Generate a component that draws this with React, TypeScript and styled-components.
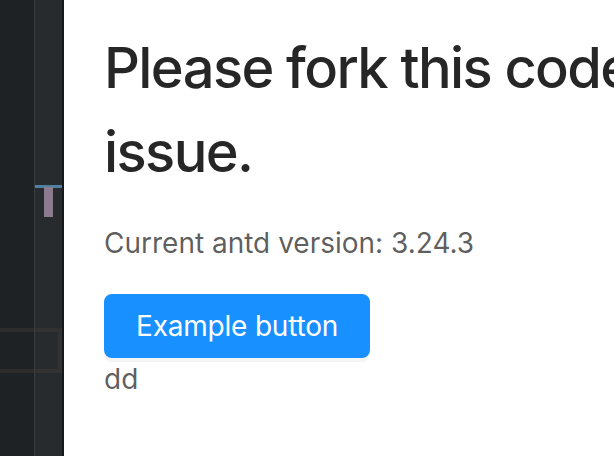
import React from "react";
import styled, { createGlobalStyle } from "styled-components";

const Global = createGlobalStyle`
  html, body { margin: 0; padding: 0; background: #ffffff; }
  body { font-family: Inter, "Noto Sans", "Liberation Sans", sans-serif; }
`;

const Frame = styled.div`
  display: flex;
  width: 614px;
  height: 456px;
  overflow: hidden;
`;

const Sidebar = styled.aside`
  position: relative;
  display: flex;
  flex: 0 0 64px;
  height: 100%;
`;

const Gutter = styled.div`
  width: 34px;
  background: #1e2225;
`;

const Divider = styled.div`
  width: 1px;
  background: #3a3e41;
`;

const Column = styled.div`
  width: 27px;
  background: #272b2e;
  padding-top: 185px;
  box-sizing: border-box;
`;

const CursorLine = styled.div`
  height: 3px;
  background: #4f7fa1;
`;

const Marker = styled.div`
  width: 9px;
  height: 30px;
  margin: -1px 0 0 9px;
  background: #8c7b8e;
`;

const Edge = styled.div`
  width: 2px;
  background: #16181a;
`;

const SelectionBox = styled.div`
  position: absolute;
  left: 0;
  top: 328px;
  width: 58px;
  height: 37px;
  border: 4px solid rgba(70, 62, 55, 0.35);
  border-left: none;
`;

const Preview = styled.main`
  flex: 1 0 auto;
  background: #ffffff;
  padding: 26px 0 0 40px;
  box-sizing: border-box;
  color: rgba(0, 0, 0, 0.65);
`;

const Title = styled.h1`
  margin: 0 0 28px;
  font-size: 56px;
  line-height: 84px;
  font-weight: 550;
  color: rgba(0, 0, 0, 0.85);
  white-space: nowrap;
  letter-spacing: -1.6px;
`;

const Version = styled.p`
  margin: 0 0 30px;
  font-size: 28px;
  line-height: 42px;
  color: rgba(0, 0, 0, 0.65);
`;

const PrimaryButton = styled.button`
  display: block;
  height: 64px;
  padding: 0 30px;
  border: 2px solid #1890ff;
  border-radius: 8px;
  background: #1890ff;
  color: #ffffff;
  font-family: inherit;
  font-size: 28px;
  line-height: 1.5;
  letter-spacing: -0.2px;
  box-shadow: 0 4px 0 rgba(0, 0, 0, 0.045);
  cursor: pointer;
`;

const Note = styled.div`
  font-size: 28px;
  line-height: 42px;
`;

export default function App() {
  return (
    <>
      <Global />
      <Frame>
        <Sidebar>
          <Gutter />
          <Divider />
          <Column>
            <CursorLine />
            <Marker />
          </Column>
          <Edge />
          <SelectionBox />
        </Sidebar>
        <Preview>
          <Title>
            Please fork this codesandbox to reproduce your
            <br />
            issue.
          </Title>
          <Version>Current antd version: 3.24.3</Version>
          <PrimaryButton type="button">Example button</PrimaryButton>
          <Note>dd</Note>
        </Preview>
      </Frame>
    </>
  );
}
